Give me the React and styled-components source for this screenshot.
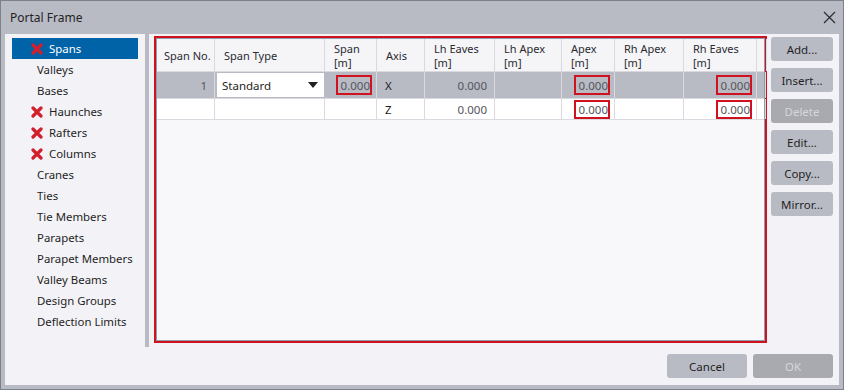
import React from "react";
import styled, { createGlobalStyle } from "styled-components";

const Global = createGlobalStyle`
  html, body { margin: 0; padding: 0; background: #ffffff; }
  * { box-sizing: border-box; }
`;

const FONT = `"Segoe UI", "Noto Sans", "Open Sans", sans-serif`;

const Window = styled.div`
  width: 844px;
  height: 390px;
  background: #b9bbc4;
  border: 1px solid #7c808b;
  display: flex;
  flex-direction: column;
  font-family: ${FONT};
  color: #1f1f24;
`;

const TitleBar = styled.div`
  height: 33px;
  display: flex;
  align-items: center;
  justify-content: space-between;
  padding: 0 7px 0 9px;
  font-size: 12px;
`;

const Body = styled.div`
  flex: 1;
  margin: 0 4px 4px 4px;
  background: #f2f2f7;
  display: flex;
  flex-direction: column;
`;

const Main = styled.div`
  height: 313px;
  display: flex;
`;

const NavPanel = styled.div`
  width: 140px;
  padding: 4px 0 0 7px;
`;

const NavItem = styled.div`
  width: 126px;
  height: 21px;
  display: flex;
  align-items: center;
  gap: 6px;
  padding-left: ${(p) => (p.$error ? "19px" : "25px")};
  font-size: 11.4px;
  background: ${(p) => (p.$selected ? "#0063a8" : "transparent")};
  color: ${(p) => (p.$selected ? "#ffffff" : "#1f1f24")};
`;

const Splitter = styled.div`
  width: 4px;
  background: #b9bbc4;
`;

const GridWrap = styled.div`
  width: 613px;
  height: 307px;
  margin: 2px 0 0 5px;
  border: 2px solid #d0121f;
`;

const Grid = styled.div`
  height: 100%;
  border: 1px solid #8e9cb0;
  background: #f8f8fb;
`;

const Row = styled.div`
  display: grid;
  grid-template-columns: 58px 110px 52px 48px 70px 67px 53px 69px 73px 1fr;
  height: ${(p) => p.$h}px;
  background: ${(p) => p.$bg};
  border-bottom: 1px solid #d9d9df;
`;

const HeadCell = styled.div`
  border-right: 1px solid #d9d9df;
  padding-left: ${(p) => p.$pl || 9}px;
  padding-top: 1px;
  display: flex;
  align-items: center;
  font-size: 11px;
  line-height: 14px;
  color: #2a2a30;
  white-space: pre;
`;

const Cell = styled.div`
  border-right: 1px solid #d9d9df;
  display: flex;
  align-items: center;
  justify-content: ${(p) => (p.$right ? "flex-end" : "flex-start")};
  padding: ${(p) => (p.$right ? "0 7px 0 0" : "0 0 0 8px")};
  font-size: 11.5px;
  color: ${(p) => (p.$muted ? "#55555c" : "#1f1f24")};
`;

const ErrorBox = styled.div`
  width: 36px;
  height: ${(p) => p.$h}px;
  margin-right: -3px;
  border: 2px solid #d0121f;
  background: ${(p) => p.$bg};
  display: flex;
  align-items: center;
  justify-content: flex-end;
  font-size: 11.5px;
  color: #55555c;
`;

const Combo = styled.div`
  margin: 1px 1px 1px 2px;
  background: #ffffff;
  display: flex;
  align-items: center;
  justify-content: space-between;
  padding: 0 6px 0 5px;
  font-size: 11.5px;
  color: #1f1f24;
`;

const Triangle = styled.span`
  width: 0;
  height: 0;
  border-left: 5px solid transparent;
  border-right: 5px solid transparent;
  border-top: 6px solid #1f1f24;
`;

const ButtonCol = styled.div`
  display: flex;
  flex-direction: column;
  gap: 7px;
  margin-left: 4px;
  padding-top: 3px;
`;

const Button = styled.div`
  width: ${(p) => p.$w || 62}px;
  height: 24px;
  border-radius: 3px;
  background: ${(p) => (p.$disabled ? "#a9aaaf" : "#b9bbc4")};
  color: ${(p) => (p.$disabled ? "#d6d6da" : "#1f1f24")};
  display: flex;
  align-items: center;
  justify-content: center;
  font-size: 11.5px;
`;

const Footer = styled.div`
  display: flex;
  justify-content: flex-end;
  gap: 6px;
  padding: 7px 6px 0 0;
`;

const RedX = () => (
  <svg width="12" height="12" viewBox="0 0 12 12">
    <path d="M2 2 L10 10 M10 2 L2 10" stroke="#d21f2b" strokeWidth="3.2" strokeLinecap="round" />
  </svg>
);

const CloseX = () => (
  <svg width="13" height="13" viewBox="0 0 13 13">
    <path d="M1 1 L12 12 M12 1 L1 12" stroke="#2a2a30" strokeWidth="1.2" />
  </svg>
);

const nav = [
  { label: "Spans", error: true, selected: true },
  { label: "Valleys" },
  { label: "Bases" },
  { label: "Haunches", error: true },
  { label: "Rafters", error: true },
  { label: "Columns", error: true },
  { label: "Cranes" },
  { label: "Ties" },
  { label: "Tie Members" },
  { label: "Parapets" },
  { label: "Parapet Members" },
  { label: "Valley Beams" },
  { label: "Design Groups" },
  { label: "Deflection Limits" },
];

const headers = [
  ["Span No.", 7],
  ["Span Type", 9],
  ["Span\n[m]", 9],
  ["Axis", 9],
  ["Lh Eaves\n[m]", 9],
  ["Lh Apex\n[m]", 9],
  ["Apex\n[m]", 9],
  ["Rh Apex\n[m]", 9],
  ["Rh Eaves\n[m]", 9],
  ["", 0],
];

const App = () => (
  <>
    <Global />
    <Window>
      <TitleBar>
        <span>Portal Frame</span>
        <CloseX />
      </TitleBar>
      <Body>
        <Main>
          <NavPanel>
            {nav.map((n) => (
              <NavItem key={n.label} $error={n.error} $selected={n.selected}>
                {n.error && <RedX />}
                <span>{n.label}</span>
              </NavItem>
            ))}
          </NavPanel>
          <Splitter />
          <GridWrap>
            <Grid>
              <Row $h={33} $bg="#f5f5f8">
                {headers.map(([h, pl], i) => (
                  <HeadCell key={i} $pl={pl}>{h}</HeadCell>
                ))}
              </Row>
              <Row $h={27} $bg="#b9bbc4">
                <Cell $right $muted>1</Cell>
                <Combo>
                  <span>Standard</span>
                  <Triangle />
                </Combo>
                <Cell $right>
                  <ErrorBox $h={20} $bg="transparent">0.000</ErrorBox>
                </Cell>
                <Cell>X</Cell>
                <Cell $right $muted>0.000</Cell>
                <Cell />
                <Cell $right>
                  <ErrorBox $h={20} $bg="transparent">0.000</ErrorBox>
                </Cell>
                <Cell />
                <Cell $right>
                  <ErrorBox $h={20} $bg="transparent">0.000</ErrorBox>
                </Cell>
                <Cell />
              </Row>
              <Row $h={21} $bg="#ffffff">
                <Cell />
                <Cell />
                <Cell />
                <Cell>Z</Cell>
                <Cell $right $muted>0.000</Cell>
                <Cell />
                <Cell $right>
                  <ErrorBox $h={19} $bg="#ffffff">0.000</ErrorBox>
                </Cell>
                <Cell />
                <Cell $right>
                  <ErrorBox $h={19} $bg="#ffffff">0.000</ErrorBox>
                </Cell>
                <Cell />
              </Row>
            </Grid>
          </GridWrap>
          <ButtonCol>
            <Button>Add...</Button>
            <Button>Insert...</Button>
            <Button $disabled>Delete</Button>
            <Button>Edit...</Button>
            <Button>Copy...</Button>
            <Button>Mirror...</Button>
          </ButtonCol>
        </Main>
        <Footer>
          <Button $w={80}>Cancel</Button>
          <Button $w={80} $disabled>OK</Button>
        </Footer>
      </Body>
    </Window>
  </>
);

export default App;
